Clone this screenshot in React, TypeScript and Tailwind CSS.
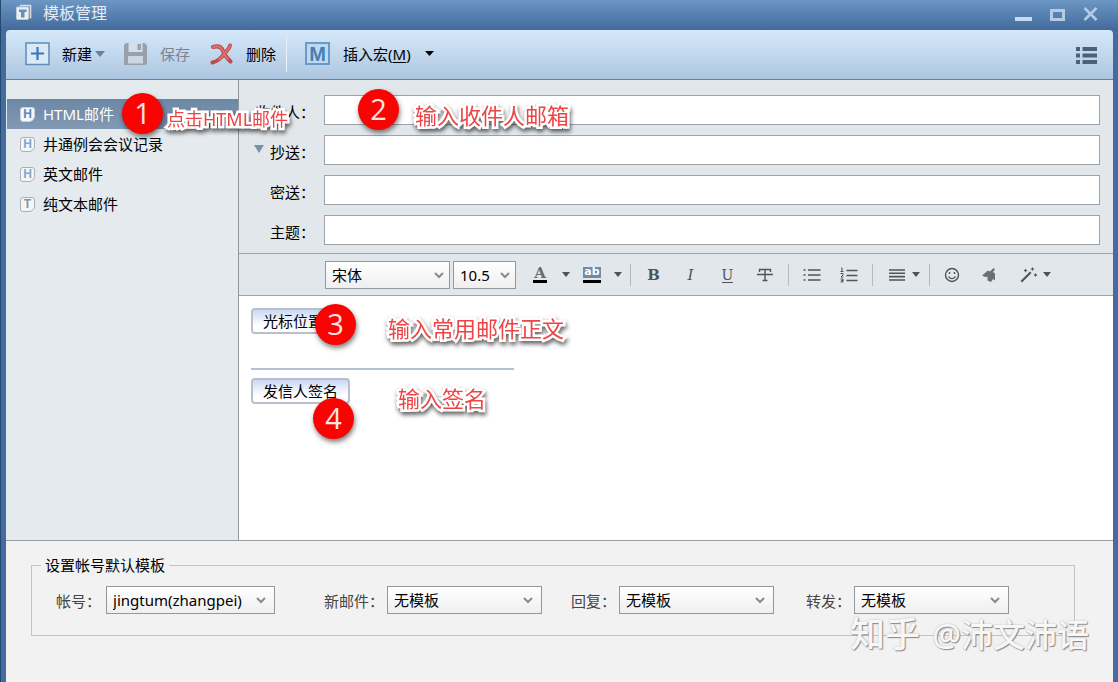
import { useState, type ReactNode } from "react";
import { clsx } from "clsx";

const FONT =
  "font-['Noto_Sans','Noto_Sans_CJK_SC',sans-serif] text-[15px] leading-5";

type SelectProps = {
  id: string;
  label?: string;
  options: string[];
  className?: string;
  arrow?: string;
};

function Select({ id, label, options, className, arrow = "right-[9px]" }: SelectProps) {
  return (
    <div className={clsx("relative h-7", className)}>
      <select
        id={id}
        aria-label={label}
        className="h-full w-full appearance-none border border-[#94989d] bg-linear-to-b from-white to-[#efefef] pr-5 pl-1.5 text-[15px] text-black outline-none"
      >
        {options.map((option) => (
          <option key={option}>{option}</option>
        ))}
      </select>
      <svg
        viewBox="0 0 10 7"
        className={clsx("pointer-events-none absolute top-[11px] h-[7px] w-2.5", arrow)}
        fill="none"
        stroke="#8b8b8b"
        strokeWidth="2"
      >
        <path d="M1 1l4 4 4-4" />
      </svg>
    </div>
  );
}

function Caret({ className }: { className?: string }) {
  return (
    <svg
      viewBox="0 0 10 6"
      preserveAspectRatio="none"
      className={clsx("shrink-0", className)}
      fill="currentColor"
    >
      <path d="M0 0h10L5 6z" />
    </svg>
  );
}

function Separator({ className }: { className?: string }) {
  return <span className={clsx("h-[22px] w-px shrink-0 bg-[#b3bac1]", className)} />;
}

type ToolProps = {
  label: string;
  className?: string;
  children: ReactNode;
};

function Tool({ label, className, children }: ToolProps) {
  return (
    <button
      type="button"
      aria-label={label}
      className={clsx("flex h-7 shrink-0 items-center justify-center text-[#4f5458]", className)}
    >
      {children}
    </button>
  );
}

function SheetIcon({ letter, selected }: { letter: string; selected?: boolean }) {
  return (
    <span
      aria-hidden="true"
      className={clsx(
        "flex h-[15px] w-[15px] shrink-0 items-center justify-center rounded-[3px] rounded-br-md border bg-[#f4f7f9] font-['Liberation_Sans',sans-serif] text-xs leading-none font-bold",
        selected ? "border-[#c4d2e0] text-[#5d87b5]" : "border-[#a9afb5]",
        !selected && (letter === "H" ? "text-[#7fa9d0]" : "text-[#8f9498]"),
      )}
    >
      {letter}
    </span>
  );
}

function TitleBar() {
  return (
    <header className="flex h-[30px] items-start justify-between pr-5 pl-[15px]">
      <div className="flex items-center gap-[11px] pt-[3px]">
        <svg viewBox="0 0 16 18" className="h-[18px] w-4" fill="none">
          <path d="M4 1.5h10.5v13" stroke="#d9dde1" strokeWidth="1.6" />
          <path d="M2.5 3.5h10v13h-10z" fill="#5b6670" />
          <rect x="0.5" y="3" width="12" height="12.500" rx="1" fill="#e9eef2" stroke="#c5cdd4" />
          <path d="M3 5.500h7.500v2.500h-2v5.500h-3.500v-5.500h-2z" fill="#5f93bd" />
        </svg>
        <h1 className="text-base leading-5 text-[#e4edf6]">模板管理</h1>
      </div>
      <div className="flex items-center gap-[18px] pt-[7px] text-[#b4cbe5]">
        <button type="button" aria-label="最小化">
          <svg viewBox="0 0 17 14" className="h-3.5 w-[17px]">
            <path d="M0 10h17v4H0z" fill="#c3dcf2" />
          </svg>
        </button>
        <button type="button" aria-label="最大化">
          <svg viewBox="0 0 15 14" className="h-3.5 w-[15px]" fill="none">
            <rect x="1.500" y="3.500" width="12" height="9" stroke="currentColor" strokeWidth="3" />
          </svg>
        </button>
        <button type="button" aria-label="关闭">
          <svg viewBox="0 0 15 14" className="h-3.5 w-[15px]" stroke="currentColor" strokeWidth="2.600">
            <path d="M1.500 1l12 12M13.500 1l-12 12" />
          </svg>
        </button>
      </div>
    </header>
  );
}

function Toolbar() {
  return (
    <div className="flex h-[50px] items-center rounded-t-[4px] border-b border-[#6b8099] bg-linear-to-b from-[#d6e9fa] to-[#adc6e0] pr-4 pb-0.5 pl-[19px]">
      <button type="button" className="flex items-center">
        <svg viewBox="0 0 25 24" className="h-6 w-[25px]" fill="none">
          <rect x="1" y="1" width="23" height="21.500" fill="#d9e9f7" stroke="#5f8db9" strokeWidth="1.500" />
          <path d="M12.500 5v13M6 11.500h13" stroke="#3d79b3" strokeWidth="2.200" />
        </svg>
        <span className="ml-3">新建</span>
        <Caret className="ml-[3px] h-1.5 w-2.5 text-[#66809c]" />
      </button>
      <button type="button" className="ml-[19px] flex items-center gap-[13px] text-[#7b838c]">
        <svg viewBox="0 0 23 24" className="h-6 w-[23px]">
          <path d="M0 3l2-2h18.500L23 3.500v18l-1.500 1.500H0z" fill="#98a0a9" />
          <path d="M4.500 1h14v9h-14z" fill="#d3dfea" />
          <path d="M13.500 2h3.500v6h-3.500z" fill="#98a0a9" />
          <path d="M4 14h15v7.500H4z" fill="#cbd7e3" />
        </svg>
        <span>保存</span>
      </button>
      <button type="button" className="ml-5 flex items-center gap-[13px]">
        <svg viewBox="0 0 23 24" className="h-6 w-[23px]" fill="none" strokeLinecap="round" strokeLinejoin="round">
          <path
            d="M3 5C8 3.500 11.500 5 13 9C14.500 13 17 16 20.500 19.500M20 3.500C19.500 7 16 9 14 12C11 16.500 7 19.500 2.500 20.500"
            stroke="#bd4a50"
            strokeWidth="4"
          />
          <path
            d="M3 5C8 3.500 11.500 5 13 9C14.500 13 16 15 18 17M20 3.500C19.500 7 16 9 14 12C13 13.500 11 16 9 17.500"
            stroke="#df6d69"
            strokeWidth="2"
          />
        </svg>
        <span>删除</span>
      </button>
      <span className="ml-2.5 h-9 w-px bg-[#e9f2fa]" />
      <button type="button" className="ml-[18px] flex items-center">
        <span
          aria-hidden="true"
          className="flex h-[23px] w-[25px] items-center justify-center border-2 border-[#6b9ac6] bg-[#b9daf2] font-['Liberation_Sans',sans-serif] text-xl leading-none font-bold text-[#4b7db0]"
        >
          M
        </span>
        <span className="ml-[13px]">
          插入宏(<span className="underline underline-offset-2">M</span>)
        </span>
        <Caret className="ml-3.5 h-[5px] w-[9px]" />
      </button>
      <button type="button" aria-label="列表" className="mt-1 ml-auto">
        <svg viewBox="0 0 21 17" className="h-[17px] w-[21px]" fill="#4b6079">
          <path d="M0 0h4v4H0zM6.500 0H21v4H6.500zM0 6.500h4v4H0zM6.500 6.500H21v4H6.500zM0 13h4v4H0zM6.500 13H21v4H6.500z" />
        </svg>
      </button>
    </div>
  );
}

const templates = [
  { name: "HTML邮件", letter: "H" },
  { name: "井通例会会议记录", letter: "H" },
  { name: "英文邮件", letter: "H" },
  { name: "纯文本邮件", letter: "T" },
];

function Sidebar() {
  const [active, setActive] = useState(0);

  return (
    <nav className="w-[233px] shrink-0 border-r border-[#8f979f] bg-[#e5eaee] pt-[19px] pl-px">
      <ul>
        {templates.map((template, index) => {
          const isActive = index === active;
          return (
            <li key={template.name}>
              <button
                type="button"
                onClick={() => setActive(index)}
                aria-current={isActive ? "true" : undefined}
                className={clsx(
                  "flex h-[30px] w-full items-center gap-2 pl-[13px]",
                  isActive && "bg-linear-to-b from-[#6c88a6] to-[#8199b3] text-white",
                )}
              >
                <SheetIcon letter={template.letter} selected={isActive} />
                {template.name}
              </button>
            </li>
          );
        })}
      </ul>
    </nav>
  );
}

const fields = [
  { id: "to", label: "收件人：" },
  { id: "cc", label: "抄送：" },
  { id: "bcc", label: "密送：" },
  { id: "subject", label: "主题：" },
];

function AddressFields() {
  return (
    <div className="flex flex-col gap-2.5 bg-[#e2e7eb] pt-[15px] pr-[13px] pb-2">
      {fields.map((field) => (
        <div key={field.id} className="flex items-center">
          <label htmlFor={field.id} className="flex w-[85px] items-center justify-end gap-1.5 pt-[3px] pr-[9px]">
            {field.id === "cc" && <Caret className="mb-1.5 h-2 w-2.5 text-[#7b8fa5]" />}
            {field.label}
          </label>
          <input
            id={field.id}
            type="text"
            className="h-[30px] min-w-0 flex-1 border border-[#9da3a9] bg-white px-2 outline-none"
          />
        </div>
      ))}
    </div>
  );
}

function FormatBar() {
  const serif = "font-['DejaVu_Serif',serif] text-[15px] leading-none";

  return (
    <div className="flex h-[43px] items-center border-y border-[#9da3a9] bg-[#e2e7eb] pl-[86px]">
      <Select id="font-family" label="字体" options={["宋体", "黑体"]} className="w-[125px]" arrow="right-1.5" />
      <Select id="font-size" label="字号" options={["10.5", "12"]} className="ml-[3px] w-[63px]" arrow="right-1.5" />
      <Tool label="字体颜色" className="ml-[11px] w-[26px]">
        <span className="flex w-3.5 justify-center border-b-[3px] border-black font-['DejaVu_Serif',serif] text-[15px] leading-[14px] font-bold text-[#666b70]">
          A
        </span>
      </Tool>
      <Tool label="选择字体颜色" className="w-[26px]">
        <Caret className="h-[5px] w-2" />
      </Tool>
      <Tool label="背景颜色" className="w-[26px]">
        <span className="w-[18px] border-b-[3px] border-black">
          <span className="mb-0.5 flex h-[11px] items-center justify-center bg-[#6f8ba5] pb-px font-['DejaVu_Sans',sans-serif] text-[11px] leading-none font-bold text-white">
            ab
          </span>
        </span>
      </Tool>
      <Tool label="选择背景颜色" className="w-[25px]">
        <Caret className="h-[5px] w-2" />
      </Tool>
      <Separator />
      <Tool label="加粗" className="ml-1 w-[37px] pt-0.5">
        <span className={clsx(serif, "font-bold")}>B</span>
      </Tool>
      <Tool label="斜体" className="w-[37px] pt-0.5">
        <span className={clsx(serif, "italic")}>I</span>
      </Tool>
      <Tool label="下划线" className="w-[37px] pt-0.5">
        <span className="border-b border-current font-['DejaVu_Serif',serif] text-sm leading-[14px]">U</span>
      </Tool>
      <Tool label="删除线" className="w-[37px]">
        <svg viewBox="0 0 16 14" className="h-3.5 w-4" fill="none" stroke="currentColor" strokeWidth="1.400">
          <path d="M2.500 4V1.500h11V4M8 1.500v11M5.500 12.500h5M0 6.500h16" />
        </svg>
      </Tool>
      <Separator className="ml-[5px]" />
      <Tool label="项目符号" className="ml-1 w-[37px]">
        <svg viewBox="0 0 18 14" className="h-3.5 w-[18px]" stroke="currentColor" strokeWidth="1.400">
          <path d="M5 2h12.500M5 7h12.500M5 12h12.500M0.500 2h2M0.500 7h2M0.500 12h2" />
        </svg>
      </Tool>
      <Tool label="编号" className="w-[37px]">
        <svg viewBox="0 0 18 16" className="h-4 w-[18px]" fill="none" stroke="currentColor">
          <path d="M6.500 3.500h11M6.500 8.500h11M6.500 13.500h11" strokeWidth="1.400" />
          <path d="M1 1h1v3.500M0.500 4.500h3M0.500 6.500h2.500v1.500l-2 2h2.500M0.500 12h2.500v3H0.500M1 13.500h2" />
        </svg>
      </Tool>
      <Separator className="ml-[5px]" />
      <Tool label="对齐" className="ml-3 w-6">
        <svg viewBox="0 0 16 12" className="h-3 w-4" stroke="currentColor" strokeWidth="1.600">
          <path d="M0 1h16M0 4.300h16M0 7.600h16M0 11h16" />
        </svg>
      </Tool>
      <Tool label="选择对齐方式" className="w-3.5">
        <Caret className="h-[5px] w-2" />
      </Tool>
      <Separator className="ml-1.5" />
      <Tool label="表情" className="ml-[3px] w-[37px]">
        <svg viewBox="0 0 16 16" className="h-4 w-4" fill="none" stroke="currentColor" strokeWidth="1.400">
          <circle cx="8" cy="8" r="6.500" />
          <path d="M4.500 9.500c1.500 2.800 5.500 2.800 7 0M5.500 5v2M10.500 5v2" />
        </svg>
      </Tool>
      <Tool label="格式刷" className="w-[37px]">
        <svg viewBox="0 0 14 16" className="h-4 w-3.5" fill="currentColor">
          <path d="M0 8.500L6 3.500l2 1L11.500 1l1.500 1.500-2 2.500 2 1.500v7l-2-1.500L9 15l-3.500-1.500V9.500L3.500 10z" fill="#6a6f73" />
        </svg>
      </Tool>
      <Tool label="特效" className="ml-2.5 w-6">
        <svg viewBox="0 0 18 16" className="h-4 w-[18px]" fill="currentColor">
          <path d="M0.500 14L10 4.500l1.500 1.500L2 15.500z" />
          <path d="M5.500 1.500l.7 1.300 1.300.7-1.300.7-.7 1.300-.7-1.300L3.500 3.500l1.300-.7zM12.500 0l.7 1.300 1.300.7-1.300.7-.7 1.300-.7-1.300-1.300-.7 1.300-.7zM15.500 6l.7 1.300 1.300.7-1.300.7-.7 1.300-.7-1.300-1.300-.7 1.300-.7z" />
        </svg>
      </Tool>
      <Tool label="选择特效" className="w-3">
        <Caret className="h-[5px] w-2" />
      </Tool>
    </div>
  );
}

function MacroChip({ children }: { children: ReactNode }) {
  return (
    <span className="inline-flex h-[26px] items-center rounded-[4px] border-2 border-[#b9c0ca] bg-linear-to-b from-[#c9d9f5] to-white to-70% px-2.5">
      {children}
    </span>
  );
}

function Editor() {
  return (
    <div className="flex flex-1 flex-col items-start bg-white px-3 pt-3">
      <MacroChip>光标位置</MacroChip>
      <hr className="mt-[34px] mb-2 w-[263px] border-t-2 border-[#b3c1d1]" />
      <MacroChip>发信人签名</MacroChip>
    </div>
  );
}

const defaults = [
  { id: "account", label: "帐号：", options: ["jingtum(zhangpei)"], gap: "ml-[15px]", labelGap: "mr-[5px]", width: "w-[169px]" },
  { id: "new-mail", label: "新邮件：", options: ["无模板", "HTML邮件"], gap: "ml-[49px]", labelGap: "mr-[3px]", width: "w-[155px]" },
  { id: "reply", label: "回复：", options: ["无模板", "HTML邮件"], gap: "ml-[29px]", labelGap: "mr-[3px]", width: "w-[155px]" },
  { id: "forward", label: "转发：", options: ["无模板", "HTML邮件"], gap: "ml-8", labelGap: "mr-[3px]", width: "w-[155px]" },
];

function AccountDefaults() {
  return (
    <footer className="min-h-[142px] border-t border-[#9a9da1] bg-[#f2f2f2] pt-3.5 pr-[38px] pb-8 pl-[25px]">
      <fieldset className="border border-[#c2c4c6] px-[9px] pt-[11px] pb-[21px]">
        <legend className="px-1">设置帐号默认模板</legend>
        <div className="flex flex-wrap gap-y-2">
          {defaults.map((item) => (
            <div key={item.id} className={clsx("flex items-center", item.gap)}>
              <label htmlFor={item.id} className={clsx("pt-0.5 text-[#444]", item.labelGap)}>
                {item.label}
              </label>
              <Select id={item.id} options={item.options} className={item.width} />
            </div>
          ))}
        </div>
      </fieldset>
    </footer>
  );
}

function StepBadge({ step, className }: { step: number; className: string }) {
  return (
    <span
      className={clsx(
        "absolute flex h-[41px] w-[41px] items-center justify-center rounded-full bg-[#fa0303] pb-0.5 font-['Open_Sans',sans-serif] text-[29px] leading-none text-[#ffe2e2] shadow-[1px_3px_5px_rgba(0,0,0,0.5)]",
        className,
      )}
    >
      {step}
    </span>
  );
}

// thick white outline; the shadows fill the notches that the stroke leaves
function StepNote({ children, className }: { children: ReactNode; className: string }) {
  return (
    <p
      className={clsx(
        "absolute whitespace-nowrap text-[#ee4444] drop-shadow-[1px_3px_2px_rgba(0,0,0,0.6)]",
        "[-webkit-text-stroke:5px_white] [paint-order:stroke_fill]",
        "[text-shadow:2px_0_white,-2px_0_white,0_2px_white,0_-2px_white,1px_1px_white,-1px_1px_white,1px_-1px_white,-1px_-1px_white]",
        className,
      )}
    >
      {children}
    </p>
  );
}

function Annotations() {
  return (
    <div className="pointer-events-none absolute inset-0">
      <StepBadge step={1} className="top-[93px] left-[121px]" />
      <StepNote className="top-[107px] left-[166px] text-lg leading-6">点击HTML邮件</StepNote>
      <StepBadge step={2} className="top-[89px] left-[357px]" />
      <StepNote className="top-[99px] left-[414px] text-[22px] leading-8">输入收件人邮箱</StepNote>
      <StepBadge step={3} className="top-[304px] left-[314px]" />
      <StepNote className="top-[312px] left-[387px] text-[22px] leading-8">输入常用邮件正文</StepNote>
      <StepBadge step={4} className="top-[398px] left-[312px]" />
      <StepNote className="top-[382px] left-[397px] text-[22px] leading-8">输入签名</StepNote>
      <p className="absolute right-[29px] bottom-[23px] text-[32px] leading-[48px] font-medium whitespace-nowrap text-[#f7f7f7] [text-shadow:1px_1px_1px_#888,0_0_2px_#bbb]">
        <span className="mr-1 text-[35px]">知乎</span> @沛文沛语
      </p>
    </div>
  );
}

export default function App() {
  return (
    <div
      className={clsx(
        FONT,
        "relative flex min-h-screen flex-col overflow-hidden border-l border-[#24496f] bg-[#446c9e] text-black",
      )}
    >
      <div className="bg-linear-to-b from-[#6c96c3] to-[#426b9c]">
        <TitleBar />
      </div>
      <div className="mr-[5px] ml-[5px] flex flex-1 flex-col">
        <Toolbar />
        <main className="flex flex-1">
          <Sidebar />
          <section className="flex min-w-0 flex-1 flex-col">
            <AddressFields />
            <FormatBar />
            <Editor />
          </section>
        </main>
        <AccountDefaults />
      </div>
      <Annotations />
    </div>
  );
}
